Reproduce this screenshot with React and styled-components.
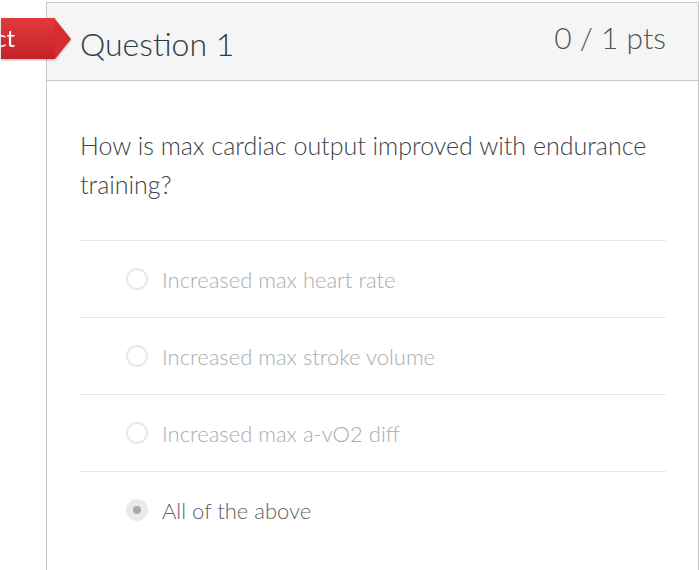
import styled, { createGlobalStyle } from "styled-components";

const GlobalStyle = createGlobalStyle`
  body {
    margin: 0;
    background: #ffffff;
    font-family: Lato, "Open Sans", sans-serif;
    font-weight: 300;
    overflow: hidden;
  }
`;

const Page = styled.div`
  position: relative;
  width: 700px;
  height: 570px;
  padding: 2px 1px 0 46px;
  box-sizing: border-box;
`;

const Card = styled.div`
  border: 1px solid #c4c8cc;
  border-bottom: none;
  height: 568px;
  box-sizing: border-box;
`;

const Header = styled.div`
  position: relative;
  display: flex;
  justify-content: space-between;
  align-items: flex-start;
  height: 78px;
  box-sizing: border-box;
  padding: 0 32px 0 33px;
  background: #f5f5f5;
  border-bottom: 1px solid #c4c8cc;
`;

const Title = styled.h2`
  margin: 22px 0 0;
  font-size: 32px;
  font-weight: 300;
  line-height: 38px;
  color: #2d3b45;
`;

const Points = styled.div`
  margin-top: 15px;
  font-size: 30px;
  line-height: 38px;
  color: #50565a;
`;

const Flag = styled.div`
  position: absolute;
  left: -46px;
  top: 15px;
  display: flex;
  align-items: center;
  height: 41px;
  filter: drop-shadow(0 1px 1px rgba(0, 0, 0, 0.3));
`;

const FlagBody = styled.div`
  width: 54px;
  height: 41px;
  background: linear-gradient(#e23a3d, #c42127);
  color: #ffffff;
  font-size: 24px;
  font-weight: 400;
  line-height: 40px;
  text-align: right;
  overflow: hidden;
  white-space: nowrap;
  direction: rtl;
  padding-right: 40px;
  box-sizing: border-box;
`;

const FlagTip = styled.div`
  width: 0;
  height: 0;
  border-top: 20.5px solid transparent;
  border-bottom: 20.5px solid transparent;
  border-left: 16px solid #d42c31;
`;

const Body = styled.div`
  padding: 0 32px 0 33px;
`;

const QuestionText = styled.p`
  margin: 45px 0 36px;
  font-size: 25px;
  line-height: 39px;
  color: #3d4449;
`;

const Answer = styled.label`
  display: flex;
  align-items: center;
  gap: 14px;
  height: 76px;
  padding-left: 46px;
  border-top: 1px solid #e6e6e6;
  font-size: 22px;
  color: ${(p) => (p.$selected ? "#5e6367" : "#a9adb0")};
`;

const Radio = styled.span`
  position: relative;
  width: 22px;
  height: 22px;
  border-radius: 50%;
  box-sizing: border-box;
  border: ${(p) => (p.$checked ? "none" : "2px solid #e9e9e9")};
  background: ${(p) => (p.$checked ? "#eaeaec" : "#ffffff")};

  &::after {
    content: "";
    display: ${(p) => (p.$checked ? "block" : "none")};
    position: absolute;
    left: 7px;
    top: 7px;
    width: 8px;
    height: 8px;
    border-radius: 50%;
    background: #a9a9ae;
  }
`;

const answers = [
  "Increased max heart rate",
  "Increased max stroke volume",
  "Increased max a-vO2 diff",
  "All of the above",
];

export default function App() {
  return (
    <>
      <GlobalStyle />
      <Page>
        <Card>
          <Header>
            <Flag>
              <FlagBody>Incorrect</FlagBody>
              <FlagTip />
            </Flag>
            <Title>Question 1</Title>
            <Points>0 / 1 pts</Points>
          </Header>
          <Body>
            <QuestionText>
              How is max cardiac output improved with endurance training?
            </QuestionText>
            {answers.map((a, i) => (
              <Answer key={a} $selected={i === 3}>
                <Radio $checked={i === 3} />
                {a}
              </Answer>
            ))}
          </Body>
        </Card>
      </Page>
    </>
  );
}
